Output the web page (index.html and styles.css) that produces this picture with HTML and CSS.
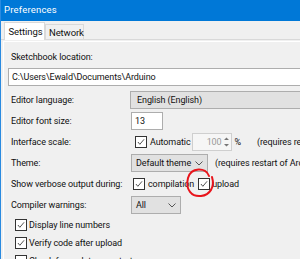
FILE: index.html
```html
<!DOCTYPE html>
<html>
<head>
<meta charset="utf-8">
<link rel="stylesheet" href="styles.css">
</head>
<body>
<div class="window">
  <div class="titlebar">Preferences</div>
  <div class="tabbar">
    <div class="tab active">Settings</div>
    <div class="tab">Network</div>
  </div>
  <div class="panel">
    <div class="label-top">Sketchbook location:</div>
    <div class="path-input">C:\Users\Ewald\Documents\Arduino</div>
    <div class="rows">
      <div class="row">
        <div class="lbl">Editor language:</div>
        <div class="select wide">English (English)</div>
      </div>
      <div class="row">
        <div class="lbl">Editor font size:</div>
        <div class="textbox small">13</div>
      </div>
      <div class="row">
        <div class="lbl">Interface scale:</div>
        <span class="cb cb-auto"><svg viewBox="0 0 13 13"><path d="M2.5 6.5 L5 9.5 L10.5 3" /></svg></span>
        <span class="txt">Automatic</span>
        <div class="spinner"><span class="num">100</span><span class="arrows"><svg viewBox="0 0 7 14"><path d="M1 5 L3.5 2.5 L6 5 Z M1 9 L3.5 11.5 L6 9 Z"/></svg></span></div>
        <span class="txt pct">%</span>
        <span class="txt note1">(requires restart of Arduino)</span>
      </div>
      <div class="row">
        <div class="lbl">Theme:</div>
        <div class="select theme">Default theme<span class="chev"><svg viewBox="0 0 8 5"><path d="M0.5 0.5 L4 4 L7.5 0.5"/></svg></span></div>
        <span class="txt note2">(requires restart of Arduino)</span>
      </div>
      <div class="row">
        <div class="lbl">Show verbose output during:</div>
        <span class="cb cb-comp"><svg viewBox="0 0 13 13"><path d="M2.5 6.5 L5 9.5 L10.5 3" /></svg></span>
        <span class="txt">compilation</span>
        <span class="cb cb-up"><svg viewBox="0 0 13 13"><path d="M2.5 6.5 L5 9.5 L10.5 3" /></svg></span>
        <span class="txt">upload</span>
      </div>
      <div class="row">
        <div class="lbl">Compiler warnings:</div>
        <div class="select warn">All<span class="chev"><svg viewBox="0 0 8 5"><path d="M0.5 0.5 L4 4 L7.5 0.5"/></svg></span></div>
      </div>
    </div>
    <div class="checks">
      <div class="crow"><span class="cb"><svg viewBox="0 0 13 13"><path d="M2.5 6.5 L5 9.5 L10.5 3" /></svg></span><span class="txt">Display line numbers</span></div>
      <div class="crow"><span class="cb"><svg viewBox="0 0 13 13"><path d="M2.5 6.5 L5 9.5 L10.5 3" /></svg></span><span class="txt">Verify code after upload</span></div>
      <div class="crow"><span class="cb"></span><span class="txt">Check for updates on startup</span></div>
    </div>
  </div>
</div>
<svg class="circle" viewBox="0 0 300 259" width="300" height="259"><path d="M209 176 C206 167 191 167 188 178 C185 190 192 197 201 196 C210 195 215 187 212 177"/></svg>
</body>
</html>
```

FILE: styles.css
```css
html, body {
  margin: 0;
  padding: 0;
}
body {
  width: 300px;
  height: 259px;
  overflow: hidden;
  background: #f0f0f0;
  font-family: Roboto, "Noto Sans", sans-serif;
  font-size: 9px;
  letter-spacing: -0.1px;
  color: #111;
  position: relative;
}
.window {
  height: 259px;
  border-left: 1px solid #2a8ae0;
  box-sizing: border-box;
  overflow: hidden;
}
.titlebar {
  height: 21px;
  background: #0078d7;
  color: #fff;
  font-size: 9.5px;
  letter-spacing: 0.2px;
  line-height: 20px;
  padding-left: 3px;
}
.tabbar {
  height: 19px;
  display: flex;
  align-items: flex-end;
  padding-left: 3px;
  border-bottom: 1px solid #d9d9d9;
  box-sizing: border-box;
}
.tab {
  height: 15px;
  line-height: 15px;
  padding: 0 3px;
  width: 39px;
  border: 1px solid #d9d9d9;
  border-bottom: none;
  background: #f0f0f0;
  box-sizing: border-box;
  text-align: center;
  font-size: 9.5px;
}
.tab.active {
  height: 18px;
  line-height: 17px;
  background: #ffffff;
  width: 41px;
  padding: 0 0 0 2px;
  margin-bottom: -1px;
}
.panel {
  margin-top: 1px;
  border-top: 1px solid #fff;
  border-left: 1px solid #fff;
  margin-left: 2px;
  padding-left: 7px;
  height: 240px;
  white-space: nowrap;
}
.label-top {
  margin-top: 9px;
  height: 12px;
  line-height: 12px;
}
.path-input {
  margin-top: 5px;
  margin-left: -3px;
  height: 18px;
  line-height: 16px;
  box-sizing: border-box;
  border: 1px solid #adadad;
  background: #fff;
  padding-left: 3px;
  width: 320px;
}
.rows {
  margin-top: 5px;
  display: flex;
  flex-direction: column;
  gap: 3px;
}
.row {
  height: 18px;
  display: flex;
  align-items: center;
}
.lbl {
  width: 120px;
  flex: none;
}
.select {
  height: 18px;
  box-sizing: border-box;
  border: 1px solid #adadad;
  background: #e1e1e1;
  line-height: 16px;
  padding-left: 4px;
  position: relative;
  flex: none;
}
.select.wide {
  margin-left: -1px;
  padding-left: 6px;
  width: 200px;
}
.select.theme {
  width: 77px;
}
.select.warn {
  width: 50px;
}
.chev {
  position: absolute;
  right: 4px;
  top: 6px;
  width: 8px;
  height: 5px;
}
.chev svg {
  display: block;
  width: 8px;
  height: 5px;
  fill: none;
  stroke: #555;
  stroke-width: 1;
}
.textbox {
  height: 18px;
  box-sizing: border-box;
  border: 1px solid #adadad;
  background: #fff;
  line-height: 16px;
  padding-left: 3px;
}
.textbox.small {
  width: 32px;
}
.cb {
  width: 12px;
  height: 12px;
  box-sizing: border-box;
  border: 1px solid #333;
  background: #fff;
  flex: none;
  display: inline-block;
}
.cb svg {
  display: block;
  width: 10px;
  height: 10px;
  fill: none;
  stroke: #333;
  stroke-width: 1.1;
}
.cb-auto {
  margin-left: 4px;
  margin-right: 3px;
}
.cb-comp {
  margin-left: 2px;
  margin-right: 3px;
}
.cb-up {
  margin-left: 4px;
  margin-right: 2px;
}
.spinner {
  margin-left: 1px;
  width: 40px;
  height: 18px;
  box-sizing: border-box;
  border: 1px solid #cfcfcf;
  background: #f6f6f6;
  display: flex;
  align-items: center;
  justify-content: flex-end;
  color: #9a9a9a;
  flex: none;
}
.spinner .num {
  margin-right: 1px;
}
.spinner .arrows {
  width: 8px;
  height: 14px;
}
.spinner svg {
  display: block;
  width: 7px;
  height: 14px;
  fill: #777;
}
.pct {
  margin-left: 3px;
}
.note1 {
  margin-left: 16px;
}
.note2 {
  margin-left: 7px;
}
.checks {
  margin-top: 2px;
  margin-left: 4px;
}
.crow {
  height: 18px;
  display: flex;
  align-items: center;
}
.crow .cb {
  margin-right: 2px;
}
.circle {
  position: absolute;
  left: 0;
  top: 0;
  pointer-events: none;
}
.circle path {
  fill: none;
  stroke: #e8141b;
  stroke-width: 2;
  stroke-linecap: round;
}
```
